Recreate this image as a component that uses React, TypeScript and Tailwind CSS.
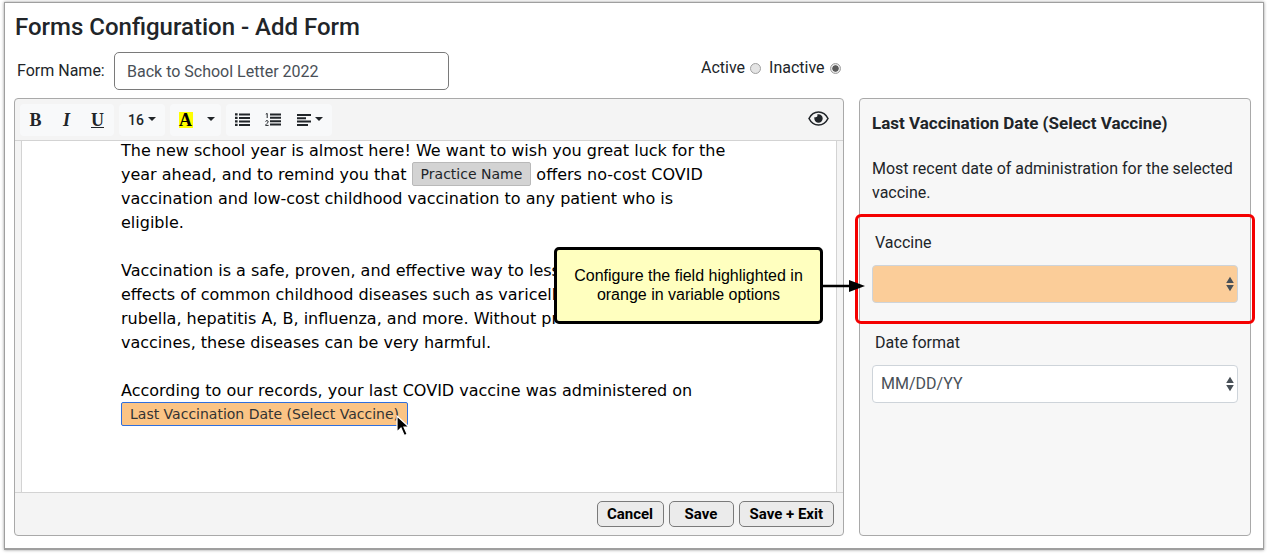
import React, { useState } from "react";

const Caret = () => (
    <svg className="mb-0.5" width="8" height="4" viewBox="0 0 8 4" fill="currentColor" aria-hidden="true">
        <path d="M0 0h8L4 4z" />
    </svg>
);

const ListIcon = () => (
    <svg width="15" height="13" viewBox="0 0 15 13" fill="currentColor" aria-hidden="true">
        <path d="M0 .3h2.600v2.200H0zM0 3.800h2.600V6H0zM0 7.300h2.600v2.200H0zM0 10.800h2.600V13H0zM4 .4h11v2H4zM4 3.900h11v2H4zM4 7.400h11v2H4zM4 10.900h11v2H4z" />
    </svg>
);

const NumberedListIcon = () => (
    <svg width="16" height="13" viewBox="0 0 16 13" aria-hidden="true">
        <path d="M5 .4h11v2H5zM5 3.800h11v2H5zM5 7.200h11v2H5zM5 10.600h11v2H5z" fill="currentColor" />
        <path d="M.8 1.200 2.200.4V5M.6 8.600C.8 7.200 3.200 7.200 3.200 8.800c0 1.200-2.600 2.200-2.600 3.600h3" fill="none" stroke="currentColor" />
    </svg>
);

const AlignIcon = () => (
    <svg width="14" height="12" viewBox="0 0 14 12" fill="currentColor" aria-hidden="true">
        <path d="M0 0h14v2H0zM0 3.300h9v2H0zM0 6.600h14v2H0zM0 10h11v2H0z" />
    </svg>
);

const EyeIcon = () => (
    <svg width="21" height="15" viewBox="0 0 21 15" aria-hidden="true">
        <path d="M1 7.500C3 3.500 6.500 1 10.500 1s7.500 2.500 9.500 6.500c-2 4-5.500 6.500-9.500 6.500S3 11.500 1 7.500z" fill="none" stroke="currentColor" strokeWidth="1.600" />
        <path d="M10.500 3.300a4.200 4.200 0 1 1-4.200 4.200c0-.5.1-1 .3-1.500 1.700 1 3.600-.8 2.600-2.500.4-.1.900-.2 1.300-.2z" fill="currentColor" />
    </svg>
);

const Sorter = () => (
    <svg className="pointer-events-none absolute right-1 top-1/2 -translate-y-1/2" width="8" height="16" viewBox="0 0 8 16" fill="#495057" aria-hidden="true">
        <path d="M4 .8l3.800 6.200H.2zM4 15.200l3.800-6.200H.2z" />
    </svg>
);

const group = "flex h-8 items-center rounded bg-[#f8f9fa]";
const tool = "flex h-8 items-center justify-center gap-1";
const chip = "-my-px inline-block h-6 rounded-xs border px-2 align-top text-sm leading-[22px]";
const footerButton = "h-[26px] rounded-[5px] border border-[#7a7a7a] bg-[#ebebeb] text-[15px] font-bold text-black";
const select = "block h-[38px] w-full appearance-none rounded border border-[#ced4da] px-2 text-[#495057]";
const radio = "size-[11px] appearance-none rounded-full border border-[#a0a0a0] bg-[#e4e4e4] bg-radial checked:from-[#5a5a5a] checked:from-45% checked:to-[#e4e4e4] checked:to-55%";

export default function App() {
    const [name, setName] = useState("Back to School Letter 2022");
    const [status, setStatus] = useState("inactive");
    const [format, setFormat] = useState("MM/DD/YY");

    return (
        <main className="bg-white pt-0.5 pr-[3px] pb-1 pl-1 font-[Roboto,sans-serif] text-base text-[#212529]">
            <div className="border border-b-2 border-[#9f9f9f] px-[9px] pt-[9px] pb-3 shadow-[0_0_3px_rgba(0,0,0,0.4)]">
                <h1 className="pl-px text-2xl leading-[30px] font-medium">Forms Configuration - Add Form</h1>

                <div className="mt-2.5 flex items-center">
                    <label htmlFor="form-name" className="w-[100px] pl-[3px]">Form Name:</label>
                    <input
                        id="form-name"
                        value={name}
                        onChange={(e) => setName(e.target.value)}
                        className="h-[38px] w-[335px] rounded-[5px] border border-[#7a7a7a] px-3 text-[#495057]"
                    />
                    <div className="mb-1.5 ml-[252px] flex gap-2">
                        <label className="flex items-center gap-[5px]">
                            Active
                            <input type="radio" name="status" checked={status === "active"} onChange={() => setStatus("active")} className={radio} />
                        </label>
                        <label className="flex items-center gap-[5px]">
                            Inactive
                            <input type="radio" name="status" checked={status === "inactive"} onChange={() => setStatus("inactive")} className={radio} />
                        </label>
                    </div>
                </div>

                <div className="mt-2 mr-[3px] flex gap-[15px]">
                    {/* Letter editor */}
                    <section className="min-w-0 flex-1 overflow-hidden rounded border border-[#a9a9a9] bg-[#f4f4f4]">
                        <div className="flex h-[42px] items-center gap-[5px] border-b border-[#d3d3d3] pr-3.5 pl-[5px]">
                            <div className={`${group} pr-px font-['Liberation_Serif',serif] text-lg`}>
                                <button aria-label="Bold" className={`${tool} w-[31px] font-bold`}>B</button>
                                <button aria-label="Italic" className={`${tool} w-[31px] font-bold italic`}>I</button>
                                <button aria-label="Underline" className={`${tool} w-[31px] font-bold underline`}>U</button>
                            </div>
                            <div className={group}>
                                <button aria-label="Font size" className={`${tool} w-[46px] text-sm font-medium`}>
                                    16 <Caret />
                                </button>
                            </div>
                            <div className={group}>
                                <button aria-label="Highlight" className={`${tool} w-[31px] font-['Liberation_Serif',serif] text-lg font-bold text-black`}>
                                    <span className="flex h-4 w-3.5 items-center justify-center bg-[#ff0]">A</span>
                                </button>
                                <button aria-label="Highlight colour" className={`${tool} w-5`}><Caret /></button>
                            </div>
                            <div className={group}>
                                <button aria-label="Bulleted list" className={`${tool} w-8`}><ListIcon /></button>
                                <button aria-label="Numbered list" className={`${tool} w-[30px]`}><NumberedListIcon /></button>
                                <button aria-label="Align" className={`${tool} w-11`}><AlignIcon /><Caret /></button>
                            </div>
                            <button aria-label="Preview" className="mb-0.5 ml-auto"><EyeIcon /></button>
                        </div>

                        <div className="h-[351px] px-1.5">
                            <div className="h-full overflow-hidden border-x border-[#d3d3d3] bg-white px-[99px] font-['DejaVu_Sans',Verdana,sans-serif] leading-6 text-black">
                                <p className="-mt-0.5">
                                    The new school year is almost here! We want to wish you great luck for the year ahead, and to remind you that{" "}
                                    <span className={`${chip} border-[#b9b9b9] bg-[#d3d3d3] text-[#212529]`}>Practice Name</span>{" "}
                                    offers no-cost COVID vaccination and low-cost childhood vaccination to any patient who is eligible.
                                </p>
                                <p className="mt-6">
                                    Vaccination is a safe, proven, and effective way to lessen the dangerous effects of common childhood diseases such as varicella, measles, mumps, rubella, hepatitis A, B, influenza, and more. Without preventative
                                    <br />
                                    vaccines, these diseases can be very harmful.
                                </p>
                                <p className="mt-6">
                                    According to our records, your last COVID vaccine was administered on{" "}
                                    <span className={`${chip} relative border-[#2f6fde] bg-[#fbc485] text-[#333]`}>
                                        Last Vaccination Date (Select Vaccine)
                                        <svg className="absolute top-3 right-[-3px]" width="14" height="22" viewBox="0 0 14 22" aria-hidden="true">
                                            <path d="M1 1v16l4-4 3.200 7.500 3-1.300L8 12h5z" fill="#000" stroke="#fff" strokeWidth="1.200" />
                                        </svg>
                                    </span>
                                </p>
                            </div>
                        </div>

                        <div className="flex h-[43px] items-center justify-end gap-[5px] border-t border-[#d3d3d3] pr-[9px]">
                            <button className={`${footerButton} w-[67px]`}>Cancel</button>
                            <button className={`${footerButton} w-[65px]`}>Save</button>
                            <button className={`${footerButton} px-2.5`}>Save + Exit</button>
                        </div>
                    </section>

                    {/* Variable options */}
                    <aside className="w-[392px] shrink-0 rounded border border-[#a9a9a9] bg-[#f7f7f7] px-3 pt-3">
                        <h2 className="text-[17px] leading-6 font-bold">Last Vaccination Date (Select Vaccine)</h2>
                        <p className="mt-[22px] leading-6">Most recent date of administration for the selected vaccine.</p>

                        <div className="relative mt-[26px]">
                            <label htmlFor="vaccine" className="block pl-[3px] leading-6">Vaccine</label>
                            <div className="relative mt-2.5">
                                <select id="vaccine" className={`${select} bg-[#fbcd99]`}>
                                    <option value=""></option>
                                </select>
                                <Sorter />
                            </div>
                            {/* Red frame and the note that points at it */}
                            <div className="pointer-events-none absolute -inset-x-[17px] -top-[17px] -bottom-[21px] rounded-md border-3 border-[#f40000]" />
                            <div className="absolute top-4 right-full mr-[7px] flex items-center">
                                <p className="w-[269px] rounded-[5px] border-3 border-black bg-[#ffffbf] px-2 pt-4 pb-[17px] text-center font-['Liberation_Sans',sans-serif] leading-[19px] text-black">
                                    Configure the field highlighted in orange in variable options
                                </p>
                                <svg width="42" height="14" viewBox="0 0 42 14" aria-hidden="true">
                                    <path d="M0 5.700h26V1l16 6-16 6V8.300H0z" />
                                </svg>
                            </div>
                        </div>

                        <div className="mt-7">
                            <label htmlFor="date-format" className="block pl-[3px] leading-6">Date format</label>
                            <div className="relative mt-2.5">
                                <select id="date-format" value={format} onChange={(e) => setFormat(e.target.value)} className={`${select} bg-white`}>
                                    <option>MM/DD/YY</option>
                                    <option>MM/DD/YYYY</option>
                                </select>
                                <Sorter />
                            </div>
                        </div>
                    </aside>
                </div>
            </div>
        </main>
    );
}
